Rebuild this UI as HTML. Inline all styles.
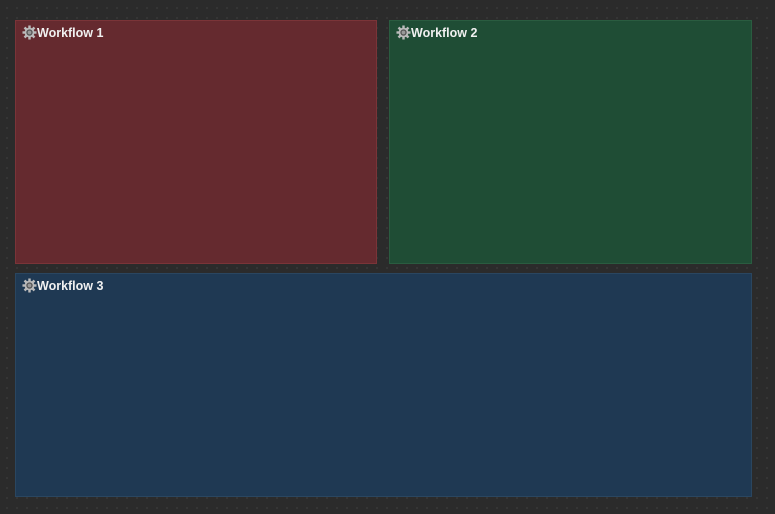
<!DOCTYPE html>
<html><head><meta charset="utf-8"><style>
html,body{margin:0;padding:0;}
body{width:775px;height:514px;overflow:hidden;background-color:#2b2b2b;
background-image:radial-gradient(circle,#383838 0.8px,transparent 1px);background-size:10px 10px;background-position:2px 3px;
font-family:"Liberation Sans",sans-serif;position:relative;}
.box{position:absolute;box-sizing:border-box;}
.t{position:absolute;left:6px;top:4px;color:#f0f0f0;font-size:12.5px;font-weight:bold;display:flex;align-items:center;gap:0px;}
svg{width:15px;height:15px;}
</style></head><body>
<div class="box" style="left:15px;top:20px;width:362px;height:244px;background:#652a2f;border:1px solid #7a3438"><div class="t"><svg viewBox="0 0 16 16"><g fill="#bbb"><circle cx="8" cy="8" r="5.2"/><g stroke="#bbb" stroke-width="2.6"><line x1="8" y1="0.5" x2="8" y2="15.5"/><line x1="0.5" y1="8" x2="15.5" y2="8"/><line x1="2.7" y1="2.7" x2="13.3" y2="13.3"/><line x1="13.3" y1="2.7" x2="2.7" y2="13.3"/></g></g><circle cx="8" cy="8" r="3.4" fill="#555"/><circle cx="8" cy="8" r="2" fill="#999"/></svg>Workflow 1</div></div>
<div class="box" style="left:389px;top:20px;width:363px;height:244px;background:#1f4d35;border:1px solid #2a5c40"><div class="t"><svg viewBox="0 0 16 16"><g fill="#bbb"><circle cx="8" cy="8" r="5.2"/><g stroke="#bbb" stroke-width="2.6"><line x1="8" y1="0.5" x2="8" y2="15.5"/><line x1="0.5" y1="8" x2="15.5" y2="8"/><line x1="2.7" y1="2.7" x2="13.3" y2="13.3"/><line x1="13.3" y1="2.7" x2="2.7" y2="13.3"/></g></g><circle cx="8" cy="8" r="3.4" fill="#555"/><circle cx="8" cy="8" r="2" fill="#999"/></svg>Workflow 2</div></div>
<div class="box" style="left:15px;top:273px;width:737px;height:224px;background:#1f3953;border:1px solid #2a4660"><div class="t"><svg viewBox="0 0 16 16"><g fill="#bbb"><circle cx="8" cy="8" r="5.2"/><g stroke="#bbb" stroke-width="2.6"><line x1="8" y1="0.5" x2="8" y2="15.5"/><line x1="0.5" y1="8" x2="15.5" y2="8"/><line x1="2.7" y1="2.7" x2="13.3" y2="13.3"/><line x1="13.3" y1="2.7" x2="2.7" y2="13.3"/></g></g><circle cx="8" cy="8" r="3.4" fill="#555"/><circle cx="8" cy="8" r="2" fill="#999"/></svg>Workflow 3</div></div>
</body></html>
